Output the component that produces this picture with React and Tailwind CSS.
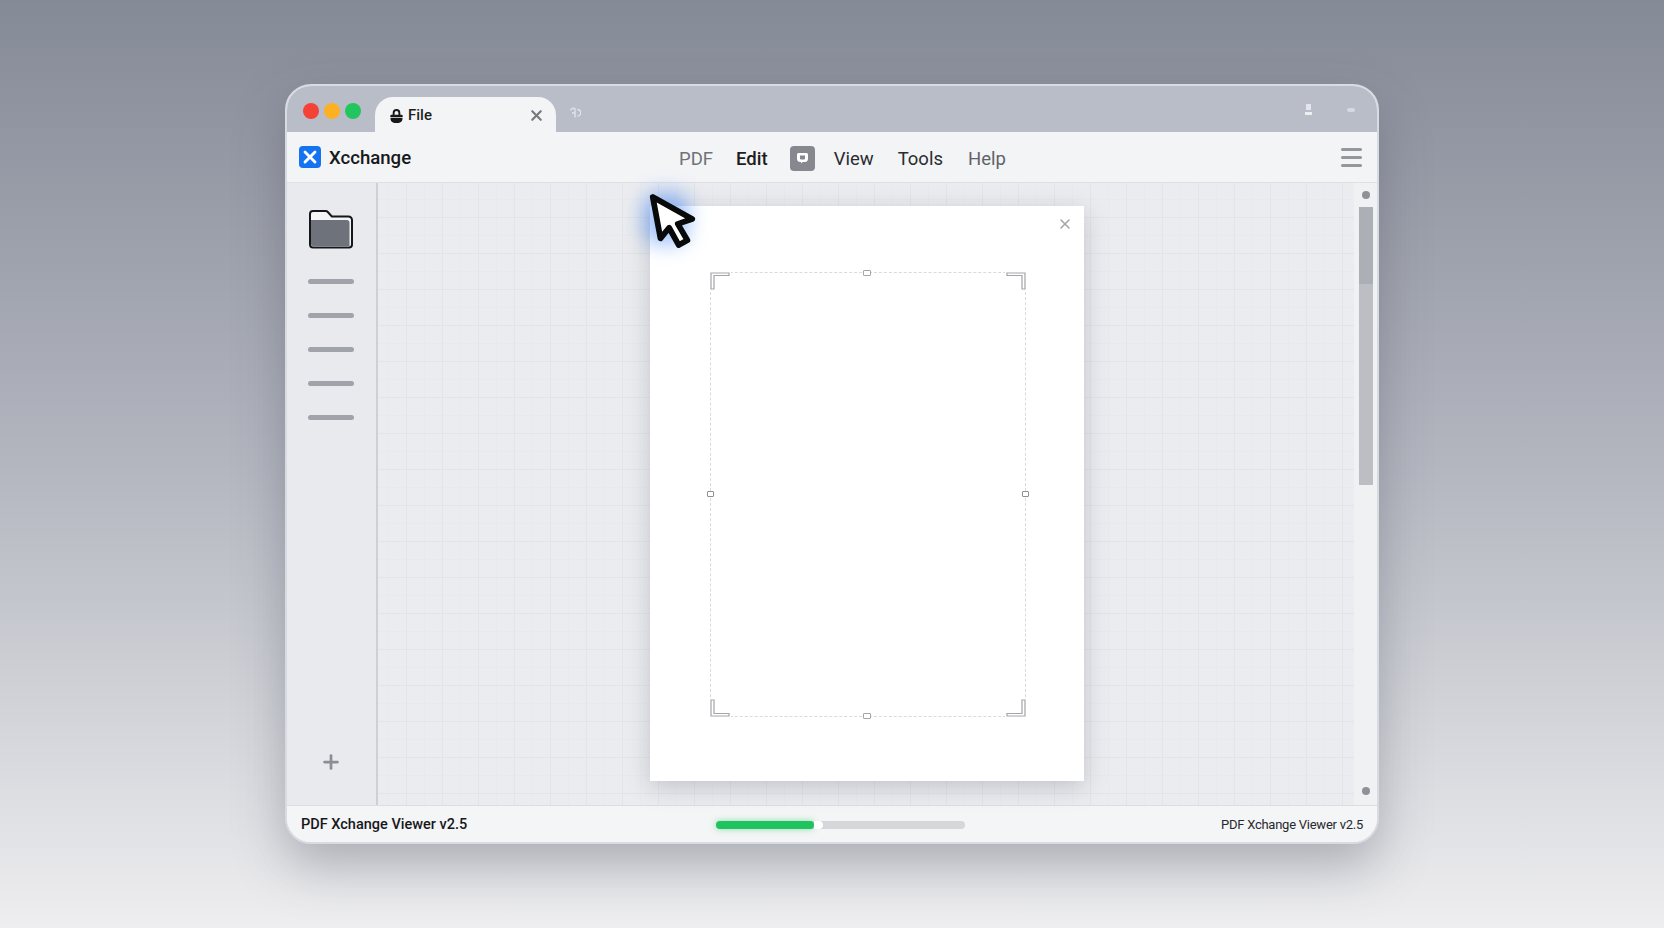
import { Plus, X } from "lucide-react";

const menuItems = [
  { label: "PDF", cls: "pt-[3px] text-[#6f7278]" },
  { label: "Edit", cls: "pt-[3px] text-[#1c1d20] font-medium ml-[23px]" },
];
const menuItemsRight = [
  { label: "View", cls: "pt-[3px] text-[#2a2c30]" },
  { label: "Tools", cls: "pt-[3px] text-[#2a2c30] ml-[24px]" },
  { label: "Help", cls: "pt-[3px] text-[#5f6268] ml-[25px]" },
];

function Folder() {
  return (
    <svg width="46" height="40" viewBox="0 0 46 40" fill="none">
      <path d="M2 5a3 3 0 0 1 3-3h12.5a3 3 0 0 1 2.3 1l4 4.5h16.7a3.5 3.5 0 0 1 3.5 3.5v24.5a3 3 0 0 1-3 3H5a3 3 0 0 1-3-3z" fill="#f4f5f7" />
      <path d="M3 11h35.5a3 3 0 0 1 3 3v23H5a2 2 0 0 1-2-2z" fill="#6d727b" />
      <path d="M2 5a3 3 0 0 1 3-3h12.5a3 3 0 0 1 2.3 1l4 4.5h16.7a3.5 3.5 0 0 1 3.5 3.5v24.5a3 3 0 0 1-3 3H5a3 3 0 0 1-3-3z" stroke="#15171a" strokeWidth="2" />
    </svg>
  );
}

function Cursor() {
  return (
    <svg width="50" height="58" viewBox="0 0 52 60" fill="none">
      <path d="M6 5 L47 28 L32 33 L42 50 L33 55 L23 37 L14 48 Z" fill="#ffffff" stroke="#08090b" strokeWidth="6" strokeLinejoin="round" />
    </svg>
  );
}

function CornerMark({ d }) {
  return (
    <svg width="20" height="18" viewBox="0 0 20 18" fill="none" className="block">
      <path d={d} stroke="#a3a5a9" strokeWidth="1.2" />
    </svg>
  );
}

function CropFrame() {
  return (
    <div className="absolute left-[60px] top-[66px] h-[445px] w-[316px] border border-dashed border-[#d9dadc]">
      <div className="absolute -left-px -top-px bg-white pb-px pr-px">
        <CornerMark d="M1 1H19V3.5H4V17H1Z" />
      </div>
      <div className="absolute -right-px -top-px bg-white pb-px pl-px">
        <CornerMark d="M19 1H1V3.5H16V17H19Z" />
      </div>
      <div className="absolute -bottom-px -left-px bg-white pr-px pt-px">
        <CornerMark d="M1 17H19V14.5H4V1H1Z" />
      </div>
      <div className="absolute -bottom-px -right-px bg-white pl-px pt-px">
        <CornerMark d="M19 17H1V14.5H16V1H19Z" />
      </div>
      <div className="absolute -top-[3px] left-[152px] h-[6px] w-[8px] rounded-[1px] border border-[#a3a5a9] bg-white" />
      <div className="absolute -bottom-[3px] left-[152px] h-[6px] w-[8px] rounded-[1px] border border-[#a3a5a9] bg-white" />
      <div className="absolute -left-[4px] top-[218px] h-[6px] w-[7px] rounded-[1px] border border-[#8d8f94] bg-white" />
      <div className="absolute -right-[4px] top-[218px] h-[6px] w-[7px] rounded-[1px] border border-[#8d8f94] bg-white" />
    </div>
  );
}

export default function App() {
  return (
    <div className="relative flex h-screen w-full justify-center overflow-hidden bg-linear-to-b from-[#858a97] via-[#b3b6bf] to-[#eeeef0] pt-[84px] font-['Roboto','Liberation_Sans',sans-serif]">
      <div className="relative flex h-[760px] w-[1094px] flex-col overflow-hidden rounded-[26px] border-2 border-[#d8dbe1] bg-[#f3f4f6] shadow-[0_22px_50px_rgba(70,75,90,0.35)]">
        {/* tab bar */}
        <div className="flex h-[46px] shrink-0 items-end bg-[#b9bdc8] pl-[16px]">
          <div className="flex gap-[5px] self-start pt-[17px]">
            <span className="h-4 w-4 rounded-full bg-[#f44336]" />
            <span className="h-4 w-4 rounded-full bg-[#fdb022]" />
            <span className="h-4 w-4 rounded-full bg-[#22c55e]" />
          </div>
          <div className="ml-[14px] flex h-[35px] w-[181px] items-center rounded-t-[18px] bg-[#f3f4f6] pl-[14px] pr-[11px] pt-[2px]">
            <svg width="15" height="16" viewBox="0 0 14 15" fill="#17181b">
              <path d="M3.4 6.4V4.6a3.6 3.6 0 0 1 7.2 0v1.8h1.2a1 1 0 0 1 1 1v1H1.2v-1a1 1 0 0 1 1-1zM5.2 6.4h3.6V4.6a1.8 1.8 0 0 0-3.6 0zM1.4 9.2h11.2a4.4 4.4 0 0 1-3.6 4.8H5a4.4 4.4 0 0 1-3.6-4.8z" />
            </svg>
            <span className="ml-[4px] text-[15px] font-medium text-[#1d1e21]">File</span>
            <X className="ml-auto text-[#76797f]" size={17} strokeWidth={3} />
          </div>
          <svg className="mb-[13px] ml-[13px]" width="12" height="12" viewBox="0 0 12 12" fill="none" stroke="#e3e5ea" strokeWidth="1.3">
            <path d="M1.5 3.5a3 3 0 0 1 4.8-1.6M6 1.5v9M8.5 2.5a3 3 0 0 1 0 6.5M3 6h3" />
          </svg>
          <div className="mb-[17px] ml-auto flex items-center gap-[35px] pr-[22px]">
            <div className="flex flex-col items-center gap-[2px]">
              <span className="h-[6px] w-[5px] bg-[#e3e5ea]" />
              <span className="h-[3px] w-[7px] bg-[#eceef2]" />
            </div>
            <span className="h-[4px] w-[8px] rounded-full bg-[#d6d9df]" />
          </div>
        </div>

        {/* menu row */}
        <div className="flex h-[51px] shrink-0 items-center border-b border-[#dfe0e3] bg-[#f3f4f6] pl-[12px] pr-[15px]">
          <div className="flex h-[22px] w-[22px] items-center justify-center rounded-[4px] bg-[#1473f0]">
            <X className="text-white" size={20} strokeWidth={3.4} />
          </div>
          <span className="ml-[8px] w-[350px] pt-[2px] text-[18.6px] font-medium leading-none text-[#17181b]">Xcchange</span>
          <div className="mt-[2px] flex items-center text-[18.5px]">
            {menuItems.map((item) => (
              <span key={item.label} className={item.cls}>{item.label}</span>
            ))}
            <div className="ml-[22px] mr-[19px] flex h-[25px] w-[25px] items-center justify-center rounded-[4px] bg-[#85888f]">
              <svg width="13" height="12" viewBox="0 0 13 12" fill="#fff">
                <path d="M2.5 1h8A1.5 1.5 0 0 1 12 2.5v4A3.5 3.5 0 0 1 8.5 10H6.5L5 11.5V10H4.5A3.5 3.5 0 0 1 1 6.5v-4A1.5 1.5 0 0 1 2.5 1zM4 3.5v3a1 1 0 0 0 1 1h3a1 1 0 0 0 1-1v-3z" />
              </svg>
            </div>
            {menuItemsRight.map((item) => (
              <span key={item.label} className={item.cls}>{item.label}</span>
            ))}
          </div>
          <div className="ml-auto mt-[1px] flex w-[21px] flex-col gap-[5px]">
            <span className="h-[3px] rounded-full bg-[#94979c]" />
            <span className="h-[3px] rounded-full bg-[#94979c]" />
            <span className="h-[3px] rounded-full bg-[#94979c]" />
          </div>
        </div>

        {/* body */}
        <div className="flex min-h-0 flex-1">
          <aside className="flex w-[91px] shrink-0 flex-col items-center border-r-2 border-[#cfd0d4] bg-[#e9eaed] pb-[32px] pr-[2px] pt-[26px]">
            <Folder />
            <div className="mt-[30px] flex flex-col gap-[29px]">
              {[0, 1, 2, 3, 4].map((i) => (
                <span key={i} className="block h-[5px] w-[46px] rounded-full bg-[#a0a3a9]" />
              ))}
            </div>
            <Plus className="mt-auto text-[#8b8e94]" size={22} strokeWidth={3} />
          </aside>

          <main className="relative flex min-w-0 flex-1 justify-center bg-[#ebecef] bg-[linear-gradient(to_right,#e3e4e8_1px,transparent_1px),linear-gradient(to_bottom,#e3e4e8_1px,transparent_1px),linear-gradient(to_right,#e8e9ec_1px,transparent_1px),linear-gradient(to_bottom,#e8e9ec_1px,transparent_1px)] bg-[size:36px_36px,36px_36px,18px_18px,18px_18px] bg-[position:28px_34px] pl-[1px] pt-[23px]">
            <div className="relative h-[575px] w-[434px] bg-white shadow-[0_6px_22px_rgba(90,95,110,0.28)]">
              <X className="absolute right-[11px] top-[10px] text-[#a4a6aa]" size={16} strokeWidth={2.4} />
              <CropFrame />
            </div>
          </main>

          <div className="flex w-[23px] shrink-0 flex-col items-center bg-[#f0f1f3] pb-[10px] pl-[1px] pt-[8px]">
            <span className="h-[8px] w-[8px] rounded-full bg-[#8e9197]" />
            <div className="mt-[8px] h-[278px] w-[14px] bg-[#bcbec4]">
              <div className="h-[77px] bg-[#acafb5]" />
            </div>
            <span className="mt-auto h-[8px] w-[8px] rounded-full bg-[#8e9197]" />
          </div>
        </div>

        {/* status bar */}
        <div className="flex h-[37px] shrink-0 items-center border-t border-[#dcdde0] bg-[#f4f5f6] pl-[14px] pr-[14px] pt-[1px]">
          <span className="w-[415px] text-[14.5px] font-medium text-[#17181b]">PDF Xchange Viewer v2.5</span>
          <div className="flex h-[8px] w-[249px] items-center rounded-full bg-[#d6d7da]">
            <div className="h-[8px] w-[98px] rounded-full bg-[#1fc45f] shadow-[0_0_6px_rgba(31,196,95,0.5)]" />
            <span className="h-[8px] w-[9px] rounded-r-full bg-white" />
          </div>
          <span className="ml-auto text-[13px] tracking-[-0.25px] text-[#27282c]">PDF Xchange Viewer v2.5</span>
        </div>

        {/* pointer lies over the page corner */}
        <div className="absolute left-[357px] top-[106px] h-[52px] w-[44px] rounded-[30%] bg-[#3b82f6] opacity-50 blur-[10px]" />
        <div className="absolute left-[360px] top-[106px]">
          <Cursor />
        </div>
      </div>
    </div>
  );
}
